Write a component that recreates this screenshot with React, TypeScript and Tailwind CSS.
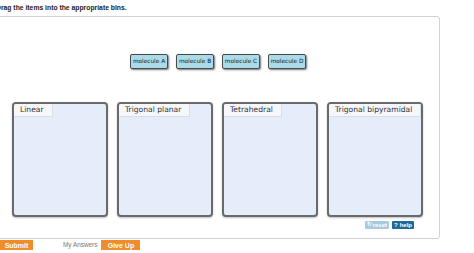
import React from "react";

const molecules = ["molecule A", "molecule B", "molecule C", "molecule D"];
const bins = ["Linear", "Trigonal planar", "Tetrahedral", "Trigonal bipyramidal"];

export default function App() {
  return (
    <div
      className="relative w-[474px] h-[253px] overflow-hidden bg-white"
      style={{ fontFamily: '"Liberation Sans", Arial, sans-serif' }}
    >
      <div className="ml-[-4px] h-[16px] pt-[4px] text-[6.8px] font-bold leading-[8px] text-[#222] whitespace-nowrap">
        Drag the items into the appropriate bins.
      </div>
      <div className="ml-[-10px] w-[450px] h-[223px] border border-[#d2d2d2] rounded-[3px] flex flex-col">
        <div className="mt-[37px] pl-[139px] flex gap-[8px]">
          {molecules.map((m) => (
            <div
              key={m}
              className="w-[38px] h-[15px] rounded-[2px] border border-[#4a4a4a] bg-[#a9dbe9] shadow-[1px_1px_2px_rgba(0,0,0,0.55)] flex items-center justify-center"
            >
              <span
                className="text-[5.8px] leading-none text-[#10202a] whitespace-nowrap"
                style={{ fontFamily: '"DejaVu Sans", Verdana, sans-serif' }}
              >
                {m}
              </span>
            </div>
          ))}
        </div>
        <div className="mt-[33px] pl-[21px] flex gap-[9px]">
          {bins.map((b) => (
            <div
              key={b}
              className="w-[96px] h-[115px] rounded-[4px] border-2 border-[#6a6a6a] bg-[#e5edfb] shadow-[0_1px_2px_rgba(0,0,0,0.25)] overflow-hidden flex flex-col items-start"
            >
              <div className="flex h-[13px] items-center bg-[#f5f7fb] border-r border-b border-[#d9dde6] pl-[6px] pr-[8px]">
                <span
                  className="text-[7.6px] leading-none text-[#333] whitespace-nowrap"
                  style={{ fontFamily: '"DejaVu Sans", Verdana, sans-serif' }}
                >
                  {b}
                </span>
              </div>
            </div>
          ))}
        </div>
        <div className="mt-[4px] pr-[25px] flex justify-end gap-[3px]">
          <div className="h-[8px] px-[2px] bg-[#a8c9de] rounded-[1px] flex items-center gap-[1px] text-[6px] font-bold leading-none text-white">
            <span className="text-[5.5px]">↻</span>
            <span>reset</span>
          </div>
          <div className="h-[8px] px-[2px] bg-[#1e6b9a] rounded-[1px] flex items-center gap-[2px] text-[6px] font-bold leading-none text-white">
            <span>?</span>
            <span>help</span>
          </div>
        </div>
      </div>
      <div className="mt-[1px] flex items-center h-[10px]">
        <div className="w-[33px] h-[10px] bg-[#ef8d2b] flex items-center justify-center text-[7px] font-bold text-white leading-none">
          Submit
        </div>
        <div className="ml-[30px] text-[6.4px] text-[#777] leading-none whitespace-nowrap">My Answers</div>
        <div className="ml-[4px] w-[39px] h-[10px] bg-[#ef8d2b] flex items-center justify-center text-[7px] font-bold text-white leading-none">
          Give Up
        </div>
      </div>
    </div>
  );
}
